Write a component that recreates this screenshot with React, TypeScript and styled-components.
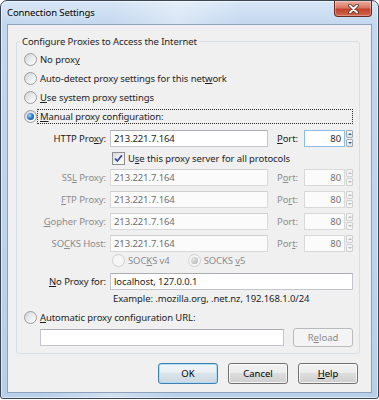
import { Fragment } from "react";
import type { ReactNode } from "react";
import styled, { createGlobalStyle, css } from "styled-components";

const GlobalStyle = createGlobalStyle`
  html, body {
    margin: 0;
    padding: 0;
    background: #ffffff;
  }
  body {
    font-family: "Noto Sans", "Open Sans", sans-serif;
    font-size: 9.5px;
    letter-spacing: -0.1px;
    color: #1e1e1e;
  }
  * {
    box-sizing: border-box;
  }
`;

type ProxyRow = { label: ReactNode; port: ReactNode };

const proxyRows: ProxyRow[] = [
  { label: <>SS<u>L</u> Proxy:</>, port: <>P<u>o</u>rt:</> },
  { label: <><u>F</u>TP Proxy:</>, port: <>Po<u>r</u>t:</> },
  { label: <><u>G</u>opher Proxy:</>, port: <>Port:</> },
  { label: <>SO<u>C</u>KS Host:</>, port: <>Por<u>t</u>:</> },
];

const PortField = ({ value, disabled }: { value: string; disabled?: boolean }) => (
  <PortBox>
    <PortInput value={value} readOnly $disabled={disabled} $focused={!disabled} />
    <Spinner>
      <SpinButton $disabled={disabled}>
        <Arrow $up $disabled={disabled} />
      </SpinButton>
      <SpinButton $disabled={disabled}>
        <Arrow $disabled={disabled} />
      </SpinButton>
    </Spinner>
  </PortBox>
);

export default function App() {
  return (
    <>
      <GlobalStyle />
      <Window>
        <TitleBar>
          <Title>Connection Settings</Title>
          <CloseButton aria-label="Close">
            <svg width="11" height="10" viewBox="0 0 11 10">
              <path d="M2 1.5 L9 8.5 M9 1.5 L2 8.5" stroke="#5a2218" strokeWidth="3.6" strokeLinecap="round" />
              <path d="M2 1.5 L9 8.5 M9 1.5 L2 8.5" stroke="#ffffff" strokeWidth="2" strokeLinecap="round" />
            </svg>
          </CloseButton>
        </TitleBar>

        <Client>
          <Group>
            <Legend>Configure Proxies to Access the Internet</Legend>

            <RadioRow>
              <Radio />
              <RadioLabel>No prox<u>y</u></RadioLabel>
            </RadioRow>
            <RadioRow>
              <Radio />
              <RadioLabel>Auto-detect proxy settings for this net<u>w</u>ork</RadioLabel>
            </RadioRow>
            <RadioRow>
              <Radio />
              <RadioLabel><u>U</u>se system proxy settings</RadioLabel>
            </RadioRow>
            <RadioRow>
              <Radio $checked />
              <RadioLabel $focused><u>M</u>anual proxy configuration:</RadioLabel>
            </RadioRow>

            <ProxyGrid>
              <FieldLabel>HTTP Pro<u>x</u>y:</FieldLabel>
              <TextField value="213.221.7.164" readOnly />
              <PortLabel><u>P</u>ort:</PortLabel>
              <PortField value="80" />

              <CheckRow>
                <Checkbox>
                  <svg width="11" height="11" viewBox="0 0 11 11">
                    <path d="M2 5.5 L4.3 8 L9 2.2" fill="none" stroke="#33489a" strokeWidth="1.7" />
                  </svg>
                </Checkbox>
                <span>U<u>s</u>e this proxy server for all protocols</span>
              </CheckRow>

              {proxyRows.map((row, i) => (
                <Fragment key={i}>
                  <FieldLabel $disabled>{row.label}</FieldLabel>
                  <TextField value="213.221.7.164" readOnly $disabled />
                  <PortLabel $disabled>{row.port}</PortLabel>
                  <PortField value="80" disabled />
                </Fragment>
              ))}
            </ProxyGrid>

            <SocksRow>
              <Radio $disabled />
              <RadioLabel $disabled>SOC<u>K</u>S v4</RadioLabel>
              <Radio $disabled $checked $gap />
              <RadioLabel $disabled>SOCKS <u>v</u>5</RadioLabel>
            </SocksRow>

            <NoProxyRow>
              <FieldLabel><u>N</u>o Proxy for:</FieldLabel>
              <TextField value="localhost, 127.0.0.1" readOnly />
            </NoProxyRow>

            <Hint>Example: .mozilla.org, .net.nz, 192.168.1.0/24</Hint>

            <AutoRadioRow>
              <Radio />
              <RadioLabel><u>A</u>utomatic proxy configuration URL:</RadioLabel>
            </AutoRadioRow>

            <UrlRow>
              <UrlField value="" readOnly />
              <ReloadButton disabled>
                R<u>e</u>load
              </ReloadButton>
            </UrlRow>
          </Group>

          <ButtonBar>
            <DialogButton $default>OK</DialogButton>
            <DialogButton>Cancel</DialogButton>
            <DialogButton><u>H</u>elp</DialogButton>
          </ButtonBar>
        </Client>
      </Window>
    </>
  );
}

const Window = styled.div`
  width: 379px;
  height: 399px;
  display: flex;
  flex-direction: column;
  padding: 0 6px 5px 6px;
  border: 1px solid #3b4655;
  border-radius: 7px 7px 3px 3px;
  background:
    linear-gradient(100deg, rgba(255, 255, 255, 0) 25%, rgba(255, 255, 255, 0.35) 40%, rgba(255, 255, 255, 0) 55%),
    linear-gradient(180deg, #d7e6f6 0%, #c3d7ee 24px, #b9cfe9 100%);
  box-shadow: inset 0 0 0 1px rgba(255, 255, 255, 0.55);
`;

const TitleBar = styled.div`
  height: 23px;
  display: flex;
  align-items: flex-start;
  justify-content: space-between;
`;

const Title = styled.div`
  line-height: 23px;
  font-size: 9.5px;
  color: #000000;
  text-shadow: 0 0 6px rgba(255, 255, 255, 0.95);
`;

const CloseButton = styled.div`
  width: 38px;
  height: 16px;
  display: flex;
  align-items: center;
  justify-content: center;
  border: 1px solid #6a2a20;
  border-top: none;
  border-radius: 0 0 4px 4px;
  background: linear-gradient(180deg, #eab0a2 0%, #d87862 45%, #c2432c 55%, #d0674d 100%);
  box-shadow: inset 0 0 0 1px rgba(255, 255, 255, 0.3);
`;

const Client = styled.div`
  flex: 1;
  display: flex;
  flex-direction: column;
  padding: 9px 11px 8px 8px;
  background: #f0f0f0;
  border: 1px solid #8da2bd;
`;

const Group = styled.fieldset`
  margin: 0;
  padding: 1px 6px 6px 7px;
  min-width: 0;
  border: 1px solid #d5dfe5;
  border-radius: 3px;
  display: flex;
  flex-direction: column;
`;

const Legend = styled.legend`
  margin-left: -4px;
  padding: 0 2px;
  line-height: 15px;
  color: #1e1e1e;
`;

const RadioRow = styled.div`
  height: 19px;
  display: flex;
  align-items: center;
`;

const AutoRadioRow = styled(RadioRow)`
  margin-top: 1px;
`;

const Radio = styled.span<{ $checked?: boolean; $disabled?: boolean; $gap?: boolean }>`
  position: relative;
  flex: none;
  width: 13px;
  height: 13px;
  margin-left: ${(p) => (p.$gap ? "15px" : "0")};
  border-radius: 50%;
  border: 1px solid ${(p) => (p.$disabled ? "#cdcfd1" : "#9a9c9e")};
  background: ${(p) =>
    p.$disabled
      ? "#f6f6f6"
      : "linear-gradient(135deg, #cfd2d6 0%, #eceef0 55%, #ffffff 100%)"};
  ${(p) =>
    p.$checked &&
    css`
      &::after {
        content: "";
        position: absolute;
        left: 2px;
        top: 2px;
        width: 7px;
        height: 7px;
        border-radius: 50%;
        background: ${p.$disabled
          ? "radial-gradient(circle at 35% 35%, #e6e6e6 0%, #acacac 100%)"
          : "radial-gradient(circle at 35% 35%, #a6d8f8 0%, #2f82cf 45%, #0c3d78 100%)"};
      }
    `}
`;

const RadioLabel = styled.span<{ $focused?: boolean; $disabled?: boolean }>`
  flex: ${(p) => (p.$focused ? "1" : "none")};
  padding: 0 2px;
  line-height: 13px;
  white-space: nowrap;
  border: 1px ${(p) => (p.$focused ? "dotted #2a2a2a" : "solid transparent")};
  color: ${(p) => (p.$disabled ? "#8c8c8c" : "#1e1e1e")};
`;

const ProxyGrid = styled.div`
  margin-top: 4px;
  display: grid;
  grid-template-columns: 86px 158px 36px 49px;
  grid-template-rows: 17px 12px repeat(4, 17px);
  row-gap: 5px;
  align-items: center;
`;

const FieldLabel = styled.label<{ $disabled?: boolean }>`
  padding-right: 4px;
  text-align: right;
  white-space: nowrap;
  line-height: 17px;
  color: ${(p) => (p.$disabled ? "#8c8c8c" : "#1e1e1e")};
`;

const PortLabel = styled.label<{ $disabled?: boolean }>`
  padding-left: 9px;
  line-height: 17px;
  white-space: nowrap;
  color: ${(p) => (p.$disabled ? "#8c8c8c" : "#1e1e1e")};
`;

const fieldBase = css`
  height: 17px;
  margin: 0;
  padding: 0 3px;
  font-family: "Noto Sans", "Open Sans", sans-serif;
  font-size: 9.5px;
  letter-spacing: -0.1px;
  outline: none;
  border-radius: 0;
  appearance: none;
`;

const TextField = styled.input<{ $disabled?: boolean }>`
  ${fieldBase};
  width: 100%;
  color: ${(p) => (p.$disabled ? "#6f6f6f" : "#1e1e1e")};
  background: ${(p) => (p.$disabled ? "#fbfbfb" : "#ffffff")};
  border: 1px solid ${(p) => (p.$disabled ? "#d9d9d9" : "#c3c7cd")};
  border-top-color: ${(p) => (p.$disabled ? "#cfcfcf" : "#abadb3")};
`;

const UrlField = styled(TextField)`
  width: 244px;
  flex: none;
`;

const PortBox = styled.div`
  display: flex;
  align-items: center;
  gap: 1px;
`;

const PortInput = styled.input<{ $disabled?: boolean; $focused?: boolean }>`
  ${fieldBase};
  width: 41px;
  text-align: right;
  color: ${(p) => (p.$disabled ? "#6f6f6f" : "#1e1e1e")};
  background: ${(p) => (p.$disabled ? "#fbfbfb" : "#ffffff")};
  border: 1px solid ${(p) => (p.$focused ? "#8cbbe6" : "#d9d9d9")};
`;

const Spinner = styled.div`
  width: 7px;
  height: 17px;
  display: flex;
  flex-direction: column;
  gap: 1px;
`;

const SpinButton = styled.div<{ $disabled?: boolean }>`
  flex: 1;
  display: flex;
  align-items: center;
  justify-content: center;
  border: 1px solid ${(p) => (p.$disabled ? "#d0d0d0" : "#9fa7b3")};
  border-radius: 1px;
  background: ${(p) =>
    p.$disabled ? "#f4f4f4" : "linear-gradient(180deg, #f8f8f8 0%, #dfe4ea 100%)"};
`;

const Arrow = styled.span<{ $up?: boolean; $disabled?: boolean }>`
  width: 0;
  height: 0;
  border-left: 2px solid transparent;
  border-right: 2px solid transparent;
  ${(p) =>
    p.$up
      ? css`border-bottom: 2px solid ${p.$disabled ? "#b8b8b8" : "#3d5c8a"};`
      : css`border-top: 2px solid ${p.$disabled ? "#b8b8b8" : "#3d5c8a"};`}
`;

const CheckRow = styled.div`
  grid-column: 2 / 5;
  height: 12px;
  display: flex;
  align-items: center;
  gap: 3px;
  padding-left: 2px;
  white-space: nowrap;
`;

const Checkbox = styled.span`
  flex: none;
  width: 13px;
  height: 13px;
  display: flex;
  align-items: center;
  justify-content: center;
  border: 1px solid #8e8f8f;
  background: linear-gradient(135deg, #d6d9dd 0%, #f3f4f5 60%, #ffffff 100%);
`;

const SocksRow = styled.div`
  height: 17px;
  display: flex;
  align-items: center;
  padding-left: 88px;
`;

const NoProxyRow = styled.div`
  margin-top: 4px;
  display: grid;
  grid-template-columns: 86px 1fr;
  align-items: center;
`;

const Hint = styled.div`
  margin-top: 1px;
  height: 16px;
  line-height: 16px;
  padding-left: 89px;
  white-space: nowrap;
  color: #1e1e1e;
`;

const UrlRow = styled.div`
  margin-top: 1px;
  height: 19px;
  display: flex;
  align-items: center;
  gap: 9px;
  padding-left: 16px;
`;

const ReloadButton = styled.button`
  width: 60px;
  height: 19px;
  padding: 0;
  font-family: "Noto Sans", "Open Sans", sans-serif;
  font-size: 9.5px;
  color: #8a8a8a;
  border: 1px solid #b7bbbe;
  border-radius: 3px;
  background: #f4f4f4;
`;

const ButtonBar = styled.div`
  margin-top: 9px;
  display: flex;
  justify-content: flex-end;
  gap: 10px;
  padding-right: 2px;
`;

const DialogButton = styled.button<{ $default?: boolean }>`
  width: 60px;
  height: 21px;
  padding: 0;
  font-family: "Noto Sans", "Open Sans", sans-serif;
  font-size: 9.5px;
  color: #000000;
  border: 1px solid ${(p) => (p.$default ? "#3c7fb1" : "#707070")};
  border-radius: 3px;
  background: ${(p) =>
    p.$default
      ? "linear-gradient(180deg, #f1f5f8 0%, #e8eef3 50%, #d9e3ea 50%, #cdd8e0 100%)"
      : "linear-gradient(180deg, #f2f2f2 0%, #ebebeb 50%, #dddddd 50%, #cfcfcf 100%)"};
  box-shadow: inset 0 0 0 1px ${(p) => (p.$default ? "rgba(170, 220, 250, 0.9)" : "rgba(255, 255, 255, 0.75)")};
`;
